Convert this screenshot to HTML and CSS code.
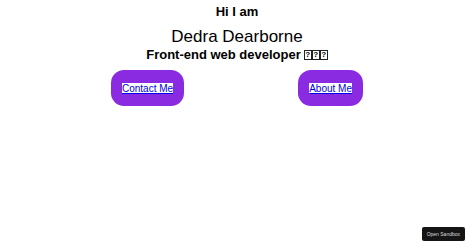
FILE: index.html
```html
<!DOCTYPE html>
<html lang="en">
<head>
    <meta charset="UTF-8">
    <meta name="viewport" content="width=device-width, initial-scale=1.0">
    <title>Dedra Dearborne</title>
    <link rel="stylesheet" href="styles.css">
</head>
<body>
    <!-- Intro -->
    <header class="intro">
        <h3 class="hello">Hi I am</h3>
        <h1 class="name">Dedra Dearborne</h1>
        <h2 class="role">Front-end web developer <span class="emoji"><span class="tofu">?</span><span class="tofu">?</span><span class="tofu">?</span></span></h2>
    </header>

    <!-- Links -->
    <div class="links">
        <div class="pill"><a href="#contact">Contact Me</a></div>
        <div class="pill"><a href="#about">About Me</a></div>
    </div>

    <button class="sandbox">Open Sandbox</button>
</body>
</html>
```

FILE: styles.css
```css
body {
    margin: 0;
    font-family: 'Liberation Sans', Arial, sans-serif;
    background-color: #fff;
    color: #000;
    height: 248px;
    position: relative;
}

/* Intro */
.intro {
    display: flex;
    flex-direction: column;
    align-items: center;
    padding-top: 4px;
}

.hello {
    margin: 0;
    font-size: 13px;
    font-weight: bold;
    line-height: 15px;
}

.name {
    margin: 8px 0 0;
    font-size: 17px;
    font-weight: normal;
    line-height: 20px;
}

.role {
    margin: 0;
    font-size: 13px;
    font-weight: bold;
    line-height: 16px;
    display: flex;
    align-items: center;
}

.emoji {
    display: flex;
    margin-left: 3px;
}

.tofu {
    display: block;
    width: 6px;
    height: 8px;
    border: 1px solid #222;
    font-size: 8px;
    line-height: 8px;
    text-align: center;
    overflow: hidden;
}

/* Links */
.links {
    display: flex;
    justify-content: space-between;
    padding: 0 111px;
    margin-top: 7px;
}

.pill {
    background-color: #8a2be2;
    border-radius: 13px;
    padding: 11px 11px;
    line-height: 12px;
}

.pill a {
    font-size: 10px;
    color: #00e;
    background-color: #fff;
}

.sandbox {
    position: absolute;
    right: 9px;
    bottom: 7px;
    background-color: #151515;
    color: #ddd;
    border: none;
    border-radius: 2px;
    font-family: 'Liberation Sans', Arial, sans-serif;
    font-size: 5px;
    padding: 4px 5px;
}
```
